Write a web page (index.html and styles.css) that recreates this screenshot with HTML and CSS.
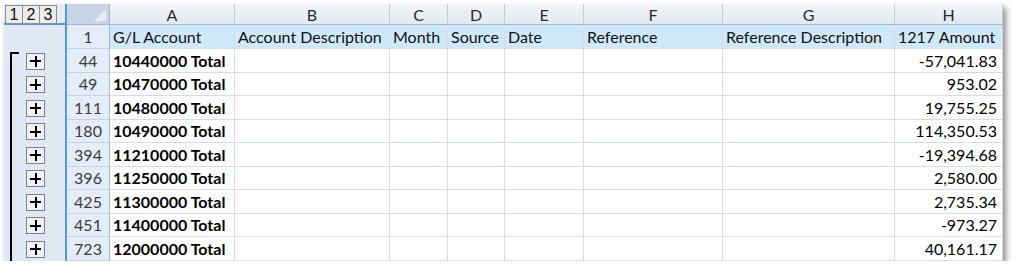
FILE: index.html
```html
<!DOCTYPE html>
<html lang="en">
<head>
    <meta charset="UTF-8">
    <title>G/L Account Totals</title>
    <link rel="stylesheet" href="styles.css">
</head>
<body>
    <div class="frame">
        <div class="outline">
            <div class="levels">
                <span class="lvl">1</span><span class="lvl">2</span><span class="lvl">3</span>
            </div>
            <div class="out-blank"></div>
            <div class="group">
                <div class="out-row"><span class="plus"></span></div>
                <div class="out-row"><span class="plus"></span></div>
                <div class="out-row"><span class="plus"></span></div>
                <div class="out-row"><span class="plus"></span></div>
                <div class="out-row"><span class="plus"></span></div>
                <div class="out-row"><span class="plus"></span></div>
                <div class="out-row"><span class="plus"></span></div>
                <div class="out-row"><span class="plus"></span></div>
                <div class="out-row"><span class="plus"></span></div>
            </div>
        </div>

        <div class="sheet">
            <!-- column letters -->
            <div class="corner"></div>
            <div class="col">A</div>
            <div class="col">B</div>
            <div class="col">C</div>
            <div class="col">D</div>
            <div class="col">E</div>
            <div class="col">F</div>
            <div class="col">G</div>
            <div class="col">H</div>

            <!-- header row -->
            <div class="rh">1</div>
            <div class="c hd">G/L Account</div>
            <div class="c hd">Account Description</div>
            <div class="c hd">Month</div>
            <div class="c hd">Source</div>
            <div class="c hd">Date</div>
            <div class="c hd">Reference</div>
            <div class="c hd">Reference Description</div>
            <div class="c hd">1217 Amount</div>

            <div class="rh">44</div>
            <div class="c acct">10440000 Total</div>
            <div class="c"></div><div class="c"></div><div class="c"></div><div class="c"></div><div class="c"></div><div class="c"></div>
            <div class="c num">-57,041.83</div>

            <div class="rh">49</div>
            <div class="c acct">10470000 Total</div>
            <div class="c"></div><div class="c"></div><div class="c"></div><div class="c"></div><div class="c"></div><div class="c"></div>
            <div class="c num">953.02</div>

            <div class="rh">111</div>
            <div class="c acct">10480000 Total</div>
            <div class="c"></div><div class="c"></div><div class="c"></div><div class="c"></div><div class="c"></div><div class="c"></div>
            <div class="c num">19,755.25</div>

            <div class="rh">180</div>
            <div class="c acct">10490000 Total</div>
            <div class="c"></div><div class="c"></div><div class="c"></div><div class="c"></div><div class="c"></div><div class="c"></div>
            <div class="c num">114,350.53</div>

            <div class="rh">394</div>
            <div class="c acct">11210000 Total</div>
            <div class="c"></div><div class="c"></div><div class="c"></div><div class="c"></div><div class="c"></div><div class="c"></div>
            <div class="c num">-19,394.68</div>

            <div class="rh">396</div>
            <div class="c acct">11250000 Total</div>
            <div class="c"></div><div class="c"></div><div class="c"></div><div class="c"></div><div class="c"></div><div class="c"></div>
            <div class="c num">2,580.00</div>

            <div class="rh">425</div>
            <div class="c acct">11300000 Total</div>
            <div class="c"></div><div class="c"></div><div class="c"></div><div class="c"></div><div class="c"></div><div class="c"></div>
            <div class="c num">2,735.34</div>

            <div class="rh">451</div>
            <div class="c acct">11400000 Total</div>
            <div class="c"></div><div class="c"></div><div class="c"></div><div class="c"></div><div class="c"></div><div class="c"></div>
            <div class="c num">-973.27</div>

            <div class="rh">723</div>
            <div class="c acct">12000000 Total</div>
            <div class="c"></div><div class="c"></div><div class="c"></div><div class="c"></div><div class="c"></div><div class="c"></div>
            <div class="c num">40,161.17</div>
        </div>
    </div>
</body>
</html>
```

FILE: styles.css
```css
* {
    margin: 0;
    padding: 0;
    box-sizing: border-box;
}

body {
    background: #fff;
    font-family: Lato, 'Liberation Sans', sans-serif;
    font-size: 16px;
    color: #000;
}

.frame {
    display: flex;
    width: 999px;
    margin: 4px 0 0 4px;
    background: #fff;
    box-shadow: 3px 4px 6px rgba(0,0,0,0.45);
}

/* outline (grouping) area */
.outline {
    width: 63px;
    display: grid;
    grid-template-rows: 21px 24px auto;
    background: #dfe8f3;
    border-right: 2px solid #4f9ae8;
}

.levels {
    display: flex;
    align-items: flex-start;
    padding: 1px 0 0 1px;
    background: #e6ebf1;
    border-bottom: 2px solid #4f9ae8;
}

.lvl {
    width: 18px;
    height: 19px;
    border: 1px solid #8a8f96;
    margin-right: -1px;
    background: #ececec;
    font-family: 'Liberation Sans', sans-serif;
    font-size: 16px;
    line-height: 17px;
    text-align: center;
    color: #111;
}

.group {
    position: relative;
    display: grid;
    grid-template-rows: repeat(9, 23.5px);
}

/* bracket showing the level-2 group */
.group::before {
    content: '';
    position: absolute;
    left: 6px;
    top: 3px;
    bottom: 0;
    width: 7px;
    border-left: 2px solid #000;
    border-top: 2px solid #000;
}

.out-row {
    display: flex;
    align-items: center;
    padding-left: 22px;
}

.plus {
    position: relative;
    width: 19px;
    height: 17px;
    border: 1px solid #7b8088;
    background: #f0f2f5;
    margin-top: 1px;
}

.plus::before,
.plus::after {
    content: '';
    position: absolute;
    background: #000;
}

.plus::before {
    left: 3px;
    top: 6.5px;
    width: 11px;
    height: 2px;
}

.plus::after {
    left: 7.5px;
    top: 2px;
    width: 2px;
    height: 11px;
}

/* the grid */
.sheet {
    display: grid;
    grid-template-columns: 43px 125px 155px 58px 57px 79px 139px 172px 108px;
    grid-template-rows: 21px 24px repeat(9, 23.5px);
}

.corner {
    position: relative;
    background: #c6d4e6;
    border-right: 1px solid #9eb6ce;
    border-bottom: 1px solid #9eb6ce;
}

.corner::after {
    content: '';
    position: absolute;
    right: 3px;
    bottom: 3px;
    border-left: 12px solid transparent;
    border-bottom: 12px solid #e7edf4;
}

.col {
    display: flex;
    align-items: center;
    justify-content: center;
    background: linear-gradient(#f2f5f9, #e3e9f1);
    border-right: 1px solid #c2cddb;
    border-bottom: 1px solid #9eb6ce;
    color: #2b2b2b;
}

.rh {
    display: flex;
    align-items: center;
    justify-content: center;
    background: #e4ecf7;
    border-right: 1px solid #9eb6ce;
    border-bottom: 1px solid #c5d3e4;
    color: #3c3c3c;
}

.c {
    display: flex;
    align-items: center;
    padding: 0 3px;
    border-right: 1px solid #d5dce8;
    border-bottom: 1px solid #d5dce8;
    white-space: nowrap;
    overflow: hidden;
}

.hd {
    background: #cfe9f9;
    color: #111;
}

.acct {
    font-weight: 700;
}

.num {
    justify-content: flex-end;
    padding-right: 5px;
}
```
